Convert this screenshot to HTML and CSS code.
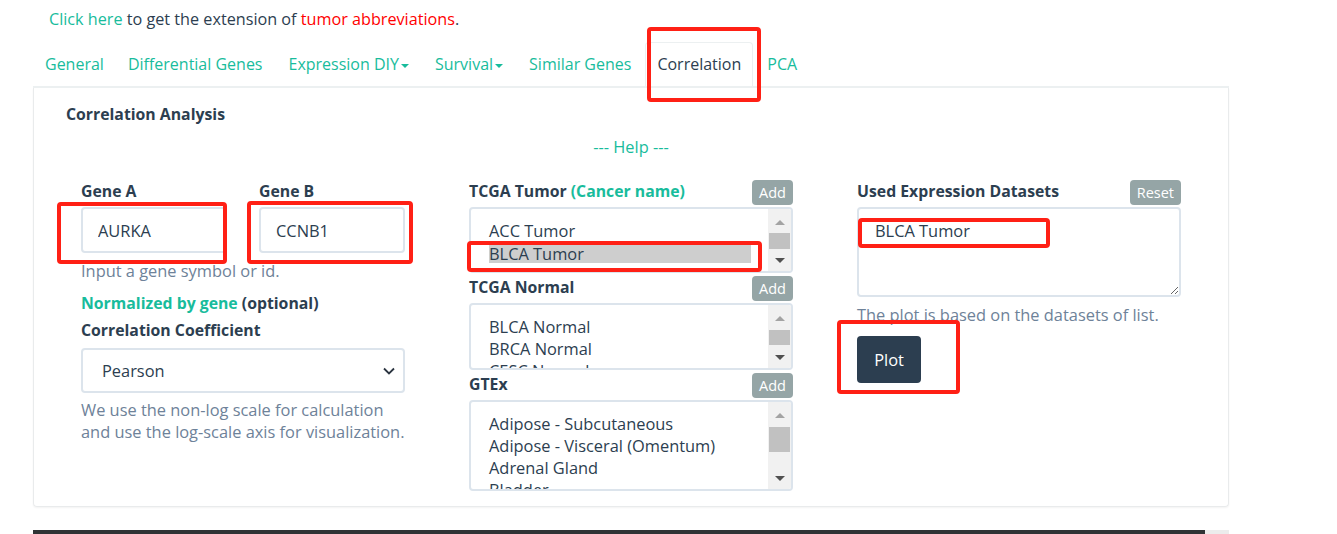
FILE: index.html
```html
<!DOCTYPE html>
<html>
<head>
<meta charset="utf-8">
<link rel="stylesheet" href="styles.css">
</head>
<body>
<div class="page">
  <p class="note"><a class="teal">Click here</a> to get the extension of <span class="red">tumor abbreviations</span>.</p>
  <ul class="tabs">
    <li class="tab">General</li>
    <li class="tab">Differential Genes</li>
    <li class="tab">Expression DIY<span class="caret"></span></li>
    <li class="tab">Survival<span class="caret"></span></li>
    <li class="tab">Similar Genes</li>
    <li class="tab active">Correlation</li>
    <li class="tab">PCA</li>
  </ul>
  <div class="panel">
    <h4 class="title">Correlation Analysis</h4>
    <div class="help">--- Help ---</div>
    <div class="cols">
      <div class="col">
        <div class="genes">
          <div class="gene">
            <label class="lbl">Gene A</label>
            <input class="input" value="AURKA">
          </div>
          <div class="gene">
            <label class="lbl">Gene B</label>
            <input class="input" value="CCNB1">
          </div>
        </div>
        <p class="muted hint1">Input a gene symbol or id.</p>
        <p class="lbl norm"><span class="teal">Normalized by gene</span> (optional)</p>
        <p class="lbl coef">Correlation Coefficient</p>
        <div class="select">
          <span>Pearson</span>
          <svg class="chev" width="12" height="8" viewBox="0 0 12 8"><path d="M1 1.5l5 5 5-5" fill="none" stroke="#2b3440" stroke-width="1.8"/></svg>
        </div>
        <p class="muted hint2">We use the non-log scale for calculation<br>and use the log-scale axis for visualization.</p>
      </div>

      <div class="col">
        <div class="lrow">
          <span class="lbl">TCGA Tumor <span class="teal">(Cancer name)</span></span>
          <span class="btn-sm">Add</span>
        </div>
        <div class="listbox lb1">
          <div class="lb-items">
            <div class="opt">ACC Tumor</div>
            <div class="opt sel">BLCA Tumor</div>
            <div class="opt">BRCA Tumor</div>
          </div>
          <div class="sb">
            <div class="sb-btn"><span class="arr-up"></span></div>
            <div class="sb-track"><div class="thumb thumb1"></div></div>
            <div class="sb-btn"><span class="arr-down"></span></div>
          </div>
        </div>
        <div class="lrow">
          <span class="lbl">TCGA Normal</span>
          <span class="btn-sm">Add</span>
        </div>
        <div class="listbox lb2">
          <div class="lb-items">
            <div class="opt">BLCA Normal</div>
            <div class="opt">BRCA Normal</div>
            <div class="opt">CESC Normal</div>
          </div>
          <div class="sb">
            <div class="sb-btn"><span class="arr-up"></span></div>
            <div class="sb-track"><div class="thumb thumb2"></div></div>
            <div class="sb-btn"><span class="arr-down"></span></div>
          </div>
        </div>
        <div class="lrow">
          <span class="lbl">GTEx</span>
          <span class="btn-sm">Add</span>
        </div>
        <div class="listbox lb3">
          <div class="lb-items">
            <div class="opt">Adipose - Subcutaneous</div>
            <div class="opt">Adipose - Visceral (Omentum)</div>
            <div class="opt">Adrenal Gland</div>
            <div class="opt">Bladder</div>
          </div>
          <div class="sb">
            <div class="sb-btn"><span class="arr-up"></span></div>
            <div class="sb-track"><div class="thumb thumb3"></div></div>
            <div class="sb-btn"><span class="arr-down"></span></div>
          </div>
        </div>
      </div>

      <div class="col">
        <div class="lrow">
          <span class="lbl">Used Expression Datasets</span>
          <span class="btn-sm">Reset</span>
        </div>
        <textarea class="area">BLCA Tumor</textarea>
        <p class="muted plotnote">The plot is based on the datasets of list.</p>
        <button class="plot">Plot</button>
      </div>
    </div>
  </div>
  <div class="bar"><div class="bar-dark"></div><div class="bar-light"></div></div>
</div>

<div class="annot an-tab"></div>
<div class="annot an-genea"></div>
<div class="annot an-geneb"></div>
<div class="annot an-blca"></div>
<div class="annot an-used"></div>
<div class="annot an-plot"></div>
</body>
</html>
```

FILE: styles.css
```css
* { box-sizing: border-box; }
html, body { overflow: hidden; }
body {
  margin: 0;
  font-family: "Open Sans", "Noto Sans", sans-serif;
  font-size: 16.4px;
  color: #2c3e50;
  background: #fff;
  position: relative;
  height: 534px;
}
p { margin: 0; }
.page { margin-left: 33px; width: 1196px; }
.note { padding: 8px 0 0 16px; line-height: 22px; font-size: 16.2px; }
.teal { color: #18bc9c; }
.red { color: #ff0000; }

.tabs {
  list-style: none;
  margin: 12px 0 0;
  padding: 0;
  display: flex;
  border-bottom: 2px solid #ecf0f1;
  font-size: 16px;
}
.tab {
  padding: 0 11px;
  line-height: 43px;
  border: 1px solid transparent;
  border-bottom: 0;
  margin-right: 2px;
  color: #18bc9c;
  border-radius: 4px 4px 0 0;
  white-space: nowrap;
}
.tab:first-child { margin-right: 0; }
.tab.active { color: #2c3e50; border-color: #ecf0f1; }
.caret {
  display: inline-block;
  width: 0; height: 0;
  border-left: 4px solid transparent;
  border-right: 4px solid transparent;
  border-top: 4px solid currentColor;
  vertical-align: middle;
  margin-left: 2px;
}

.panel {
  border: 1px solid #e9ebec;
  border-top: 0;
  border-radius: 0 0 4px 4px;
  padding: 15px 32px 15px;
  box-shadow: 0 1px 2px rgba(0,0,0,0.05);
}
.title { margin: 0; font-size: 15.8px; font-weight: 700; line-height: 22px; }
.help { text-align: center; color: #18bc9c; margin-top: 11px; line-height: 22px; }
.cols {
  display: grid;
  grid-template-columns: repeat(3, 324px);
  column-gap: 64px;
  margin: 22px 0 0 15px;
  align-items: start;
}
.lbl { font-weight: 700; line-height: 22px; display: block; font-size: 15.8px; }
.genes { display: flex; gap: 32px; }
.gene { width: 146px; }
.gene .lbl { height: 25px; }
.input {
  display: block;
  width: 146px;
  height: 46px;
  margin-top: 2px;
  border: 2px solid #dce4ec;
  border-radius: 4px;
  padding: 0 15px;
  font: inherit;
  color: #2c3e50;
  outline: none;
}
.muted { color: #6e8299; line-height: 22px; }
.hint1 { margin-top: 7px; }
.norm { margin-top: 10px; }
.coef { margin-top: 5px; }
.select {
  margin-top: 7px;
  height: 45px;
  border: 2px solid #dce4ec;
  border-radius: 4px;
  display: flex;
  align-items: center;
  justify-content: space-between;
  padding: 0 8px 0 19px;
}
.hint2 { margin-top: 6px; }

.lrow {
  display: flex;
  justify-content: space-between;
  align-items: flex-start;
  height: 25px;
}
.btn-sm {
  background: #95a5a6;
  color: #fff;
  border-radius: 4px;
  height: 25px;
  line-height: 25px;
  padding: 0 7px;
  font-size: 14.5px;
}
.listbox {
  margin-top: 2px;
  margin-bottom: 3px;
  border: 2px solid #dce4ec;
  border-radius: 4px;
  display: flex;
  overflow: hidden;
}
.lb1 { height: 66px; }
.lb2 { height: 67px; }
.lb3 { height: 91px; margin-bottom: 0; }
.lb-items { flex: 1; padding: 11px 15px 0 16px; overflow: hidden; }
.opt { line-height: 22px; padding: 0 2px; white-space: nowrap; }
.opt.sel {
  background: #cecece;
  background-clip: content-box;
  line-height: 19px;
  padding-top: 2px;
  padding-bottom: 1px;
}
.sb {
  width: 23px;
  background: #f1f1f1;
  display: flex;
  flex-direction: column;
}
.sb-btn {
  height: 22px;
  display: flex;
  align-items: center;
  justify-content: center;
}
.sb-btn:first-child { padding-top: 4px; }
.sb-track { flex: 1; }
.thumb { width: 21px; margin-left: 1px; background: #c1c1c1; }
.thumb1 { margin-top: 2px; height: 16px; }
.thumb2 { margin-top: 3px; height: 15px; }
.thumb3 { margin-top: 3px; height: 25px; }
.arr-up {
  width: 0; height: 0;
  border-left: 5px solid transparent;
  border-right: 5px solid transparent;
  border-bottom: 5px solid #a3a3a3;
}
.arr-down {
  width: 0; height: 0;
  border-left: 5px solid transparent;
  border-right: 5px solid transparent;
  border-top: 5px solid #505050;
}

.area {
  display: block;
  width: 324px;
  height: 90px;
  margin: 2px 0 0;
  border: 2px solid #dce4ec;
  border-radius: 4px;
  padding: 11px 16px;
  font: inherit;
  line-height: 22px;
  color: #2c3e50;
  outline: none;
}
.plotnote { margin-top: 7px; }
.plot {
  margin-top: 10px;
  width: 64px;
  height: 47px;
  background: #2c3e50;
  color: #fff;
  border: 0;
  border-radius: 4px;
  font: inherit;
  padding: 0;
}

.bar { margin-top: 23px; display: flex; height: 4px; }
.bar-dark { width: 1172px; background: #2f3335; }
.bar-light { flex: 1; background: #ececec; }

.annot {
  position: absolute;
  border: 4px solid #ff2015;
  border-radius: 4px;
}
.an-tab { left: 647px; top: 27px; width: 114px; height: 75px; }
.an-genea { left: 57px; top: 202px; width: 170px; height: 62px; }
.an-geneb { left: 247px; top: 201px; width: 166px; height: 63px; }
.an-blca { left: 467px; top: 241px; width: 295px; height: 31px; }
.an-used { left: 858px; top: 218px; width: 192px; height: 30px; }
.an-plot { left: 837px; top: 320px; width: 123px; height: 74px; }
```
